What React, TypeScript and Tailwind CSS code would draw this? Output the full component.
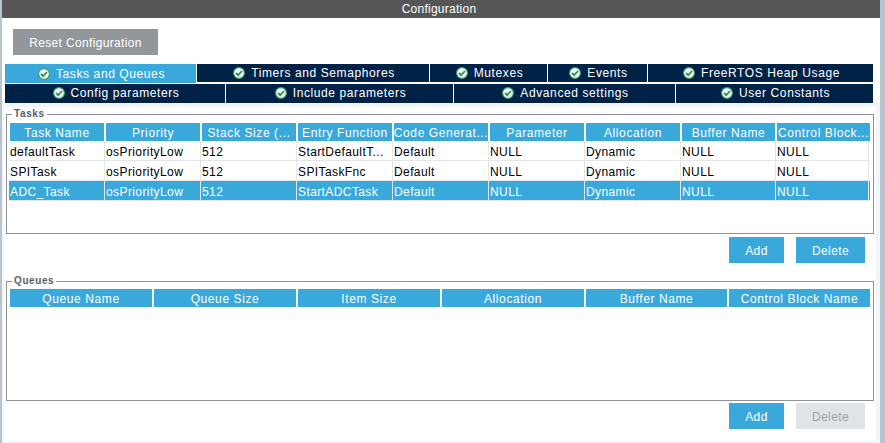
const font = "font-['Liberation_Sans',Arial,sans-serif]";

function Check() {
  return (
    <svg width="12" height="12" viewBox="0 0 12 12" className="shrink-0">
      <circle cx="6" cy="6" r="5.4" fill="#f1f8f4" stroke="#3f9f6c" strokeWidth="1.2" />
      <path d="M3.1 6 L5.2 8.1 L9 4" fill="none" stroke="#2f8f5c" strokeWidth="1.8" />
    </svg>
  );
}

function Tab({ label, w, active, low }: { label: string; w: string; active?: boolean; low?: boolean }) {
  return (
    <div className={`${w} shrink-0 flex items-center justify-center gap-[6px] pl-[2px] text-[12px] tracking-[0.6px] text-white ${low ? "pb-[2px]" : ""} ${active ? "bg-[#39a9dc] -mb-px" : "bg-[#002247]"}`}>
      <Check />
      <span>{label}</span>
    </div>
  );
}

function Btn({ label, w, off }: { label: string; w: string; off?: boolean }) {
  return (
    <div className={`${w} h-[26px] pt-px flex items-center justify-center text-[12px] tracking-[0.4px] ${off ? "bg-[#e1e4e7] text-[#9ca3a8]" : "bg-[#39a9dc] text-white"}`}>
      {label}
    </div>
  );
}

const taskCols = ["Task Name", "Priority", "Stack Size (...", "Entry Function", "Code Generat...", "Parameter", "Allocation", "Buffer Name", "Control Block..."];
const rows = [
  ["defaultTask", "osPriorityLow", "512", "StartDefaultT...", "Default", "NULL", "Dynamic", "NULL", "NULL"],
  ["SPITask", "osPriorityLow", "512", "SPITaskFnc", "Default", "NULL", "Dynamic", "NULL", "NULL"],
  ["ADC_Task", "osPriorityLow", "512", "StartADCTask", "Default", "NULL", "Dynamic", "NULL", "NULL"],
];
const queueCols = ["Queue Name", "Queue Size", "Item Size", "Allocation", "Buffer Name", "Control Block Name"];
const queueW = ["w-[142px] mr-[2px]", "w-[142px] mr-[2px]", "w-[142px] mr-[2px]", "w-[142px] mr-[2px]", "w-[141px] mr-[2px]", "w-[141px]"];
const taskHeadW = ["w-[94px] mr-[2px]", "w-[94px] mr-[2px]", "w-[94px] mr-[2px]", "w-[94px] mr-[2px]", "w-[94px] mr-[2px]", "w-[94px] mr-[2px]", "w-[94px] mr-[2px]", "w-[93px] mr-[2px]", "w-[93px]"];

function Head({ label, w }: { label: string; w: string }) {
  return (
    <div className={`${w} shrink-0 h-[18px] pt-px flex items-center justify-center bg-[#39a9dc] text-white text-[12px] tracking-[0.6px] whitespace-nowrap overflow-hidden`}>
      {label}
    </div>
  );
}

function Legend({ label }: { label: string }) {
  return (
    <legend className="ml-[2px] px-[2px] text-[10px] leading-[10px] font-bold tracking-[0.6px] text-[#5b6066]">{label}</legend>
  );
}

export default function App() {
  return (
    <div className={`${font} w-[885px] h-[443px] overflow-hidden bg-[#b9c5cc] pl-[2px] pr-[5px] flex flex-col`}>
      <div className="h-[18px] shrink-0 bg-[#555655] text-white text-[12px] tracking-[0.25px] pr-[4px] flex items-center justify-center">Configuration</div>
      <div className="flex-1 bg-[#f3f5f7] flex flex-col">
        <div className="h-[85px] shrink-0 bg-white pl-[11px] pt-[11px]">
          <div className="w-[145px] h-[26px] pt-px bg-[#92979c] text-white text-[12px] tracking-[0.35px] flex items-center justify-center">Reset Configuration</div>
        </div>
        <div className="h-[39px] shrink-0 bg-white -mt-[39px] ml-[3px] w-[868px] flex flex-col gap-[2px]">
          <div className="h-[18px] flex gap-px">
            <Tab label="Tasks and Queues" w="w-[191px]" active />
            <Tab label="Timers and Semaphores" w="w-[232px]" />
            <Tab label="Mutexes" w="w-[117px]" />
            <Tab label="Events" w="w-[99px]" />
            <Tab label="FreeRTOS Heap Usage" w="w-[225px]" />
          </div>
          <div className="h-[19px] flex gap-px">
            <Tab label="Config parameters" w="w-[220px]" low />
            <Tab label="Include parameters" w="w-[227px]" low />
            <Tab label="Advanced settings" w="w-[221px]" low />
            <Tab label="User Constants" w="w-[197px]" low />
          </div>
        </div>
        <div className="mt-[4px] ml-[2px] w-[872px] h-[334px] bg-white px-[2px] pt-[2px] flex flex-col">
          <fieldset className="h-[125px] shrink-0 border border-[#8e9397] px-[3px] min-w-0 pt-0">
            <Legend label="Tasks" />
            <div className="flex mt-[4px]">
              {taskCols.map((c, i) => <Head key={c} label={c} w={taskHeadW[i]} />)}
            </div>
            {rows.map((r, ri) => (
              <div key={r[0]} className={`flex h-[20px] -ml-px w-[861px] border-b border-[#e3e5e8] ${ri === 2 ? "bg-[#39a9dc] text-white" : "text-black"}`}>
                {r.map((c, i) => (
                  <div key={i} className={`${i === 8 ? "w-[93px]" : i === 7 ? "w-[95px]" : "w-[96px]"} shrink-0 border-r border-[#e3e5e8] pl-px pt-[2px] text-[12px] tracking-[0.4px] flex items-center whitespace-nowrap overflow-hidden`}>{c}</div>
                ))}
              </div>
            ))}
          </fieldset>
          <div className="flex justify-end gap-[12px] pr-[9px] mt-[3px] shrink-0">
            <Btn label="Add" w="w-[55px]" />
            <Btn label="Delete" w="w-[69px]" />
          </div>
          <fieldset className="h-[125px] mt-[13px] shrink-0 border border-[#8e9397] px-[3px] min-w-0 pt-0">
            <Legend label="Queues" />
            <div className="flex mt-[3px]">
              {queueCols.map((c, i) => <Head key={c} label={c} w={queueW[i]} />)}
            </div>
          </fieldset>
          <div className="flex justify-end gap-[12px] pr-[9px] mt-[2px] shrink-0">
            <Btn label="Add" w="w-[55px]" />
            <Btn label="Delete" w="w-[69px]" off />
          </div>
        </div>
      </div>
    </div>
  );
}
